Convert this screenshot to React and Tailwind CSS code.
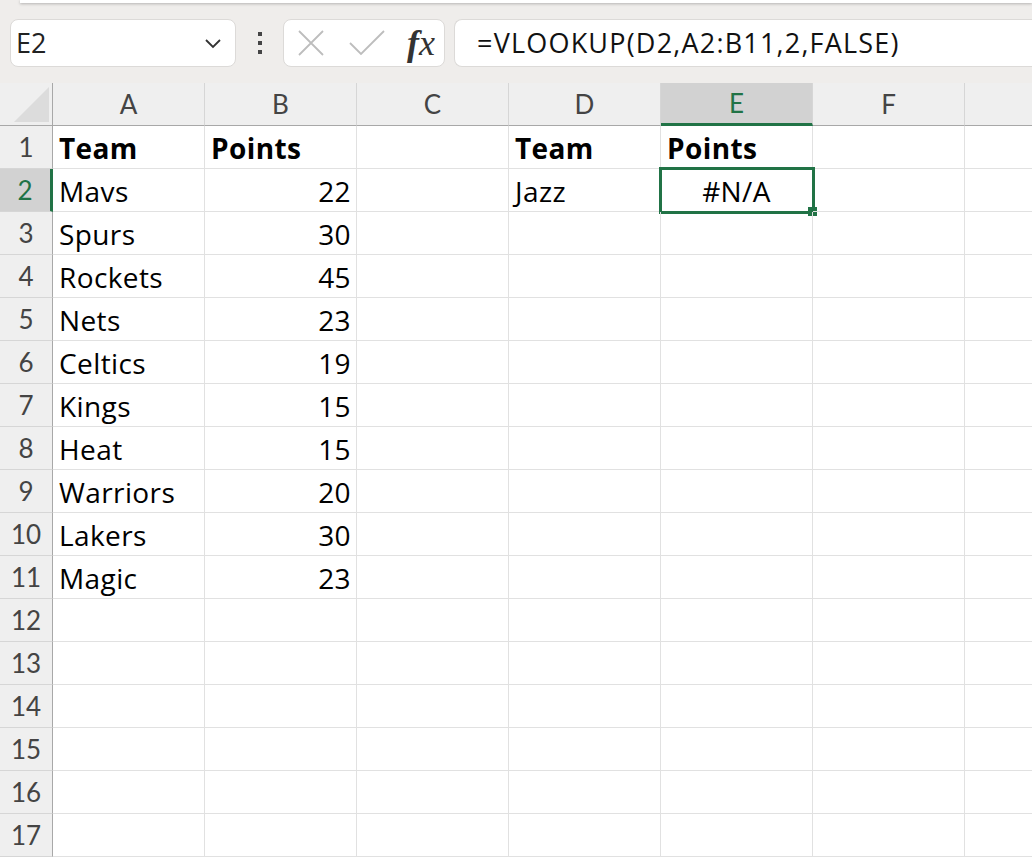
import React from 'react';

const cols = ['A', 'B', 'C', 'D', 'E', 'F', 'G'];

// sheet contents, keyed by row then column letter
const data = {
  1: { A: 'Team', B: 'Points', D: 'Team', E: 'Points' },
  2: { A: 'Mavs', B: 22, D: 'Jazz', E: '#N/A' },
  3: { A: 'Spurs', B: 30 },
  4: { A: 'Rockets', B: 45 },
  5: { A: 'Nets', B: 23 },
  6: { A: 'Celtics', B: 19 },
  7: { A: 'Kings', B: 15 },
  8: { A: 'Heat', B: 15 },
  9: { A: 'Warriors', B: 20 },
  10: { A: 'Lakers', B: 30 },
  11: { A: 'Magic', B: 23 },
};

const rows = Array.from({ length: 17 }, (_, i) => i + 1);

const cellFont = { fontFamily: '"Open Sans", "Liberation Sans", sans-serif' };

const Cell = ({ row, col }) => {
  const value = data[row]?.[col];
  const bold = row === 1;
  const isNum = typeof value === 'number';
  const selected = row === 2 && col === 'E';

  let align = 'justify-start pl-[6px]';
  if (isNum) align = 'justify-end pr-[5px]';
  if (selected) align = 'justify-center';

  return (
    <div
      style={cellFont}
      className={`relative h-[43px] border-r border-b border-[#e1e1e1] flex items-end pb-[1px] text-[28px] tracking-[0.4px] leading-[38px] text-black ${align} ${bold ? 'font-bold' : ''}`}
    >
      {value}
      {selected && (
        <>
          <div className="absolute -left-[2px] -top-[2px] w-[156px] h-[47px] border-[3px] border-[#217346] pointer-events-none" />
          <div className="absolute -right-[5px] -bottom-[5px] w-[9px] h-[9px] bg-[#217346]" />
        </>
      )}
    </div>
  );
};

export default function App() {
  return (
    <div className="w-[1032px] h-[857px] overflow-hidden bg-white" style={{ fontFamily: 'Lato, "Liberation Sans", sans-serif' }}>
      {/* formula bar area */}
      <div className="h-[83px] bg-[#efedeb] relative">
        <div className="absolute left-[20px] right-0 top-0 h-[3px] bg-white shadow-[0_1px_3px_rgba(0,0,0,0.25)]" />
        <div className="flex items-center h-full pt-[3px] pl-[10px]">
          {/* name box */}
          <div className="w-[226px] h-[48px] bg-white rounded-[8px] border border-[#dcdad8] flex items-center justify-between pl-[5px] pr-[10px]">
            <span className="text-[27px] text-[#222]" style={cellFont}>E2</span>
            <svg width="24" height="24" viewBox="0 0 24 24" fill="none" stroke="#333" strokeWidth="1.8">
              <path d="M5 9l7 7 7-7" />
            </svg>
          </div>
          {/* vertical dots */}
          <div className="w-[47px] flex flex-col items-center gap-[5px]">
            <div className="w-[4px] h-[4px] bg-[#444]" />
            <div className="w-[4px] h-[4px] bg-[#444]" />
            <div className="w-[4px] h-[4px] bg-[#444]" />
          </div>
          {/* cancel / enter / fx */}
          <div className="w-[162px] h-[48px] bg-white rounded-[8px] border border-[#dcdad8] flex items-center pl-[12px] pr-[9px] justify-between">
            <svg width="30" height="30" viewBox="0 0 30 30" stroke="#bdbdbd" strokeWidth="1.8" fill="none">
              <path d="M3 3l24 24M27 3L3 27" />
            </svg>
            <svg width="38" height="30" viewBox="0 0 38 30" stroke="#bdbdbd" strokeWidth="1.8" fill="none">
              <path d="M2 15l11 11L36 3" />
            </svg>
            <span className="text-[36px] text-[#333] italic leading-none" style={{ fontFamily: '"Liberation Serif", serif' }}>
              <span className="font-bold">f</span>x
            </span>
          </div>
          {/* formula input */}
          <div className="ml-[9px] flex-1 h-[48px] bg-white rounded-l-[8px] border border-r-0 border-[#dcdad8] flex items-center pl-[22px]">
            <span className="text-[27px] tracking-[1.2px] text-[#111]" style={cellFont}>=VLOOKUP(D2,A2:B11,2,FALSE)</span>
          </div>
        </div>
      </div>

      {/* sheet grid */}
      <div className="grid grid-cols-[53px_repeat(7,152px)] w-[1117px]">
        {/* corner */}
        <div className="h-[43px] bg-[#efefef] border-r border-b border-[#a8a8a8] relative overflow-hidden">
          <svg className="absolute right-[3px] bottom-[3px]" width="35" height="35" viewBox="0 0 35 35">
            <path d="M35 0V35H0Z" fill="#dcdcdc" />
          </svg>
        </div>
        {cols.map((c) => {
          const active = c === 'E';
          return (
            <div
              key={c}
              className={`h-[43px] flex items-center justify-center text-[26px] border-r border-[#d6d6d6] ${
                active ? 'bg-[#d2d2d2] text-[#217346] border-b-[3px] border-b-[#217346]' : 'bg-[#efefef] text-[#444] border-b border-b-[#a8a8a8]'
              }`}
            >
              {/* G's label sits past the window edge */}
              {c === 'G' ? '' : c}
            </div>
          );
        })}

        {rows.map((r) => (
          <React.Fragment key={r}>
            <div
              className={`h-[43px] flex items-center justify-center text-[26px] border-b border-[#d6d6d6] ${
                r === 2 ? 'bg-[#d2d2d2] text-[#217346] border-r-[3px] border-r-[#217346]' : 'bg-[#efefef] text-[#444] border-r border-r-[#a8a8a8]'
              }`}
            >
              {r}
            </div>
            {cols.map((c) => (
              <Cell key={c} row={r} col={c} />
            ))}
          </React.Fragment>
        ))}
      </div>
    </div>
  );
}
